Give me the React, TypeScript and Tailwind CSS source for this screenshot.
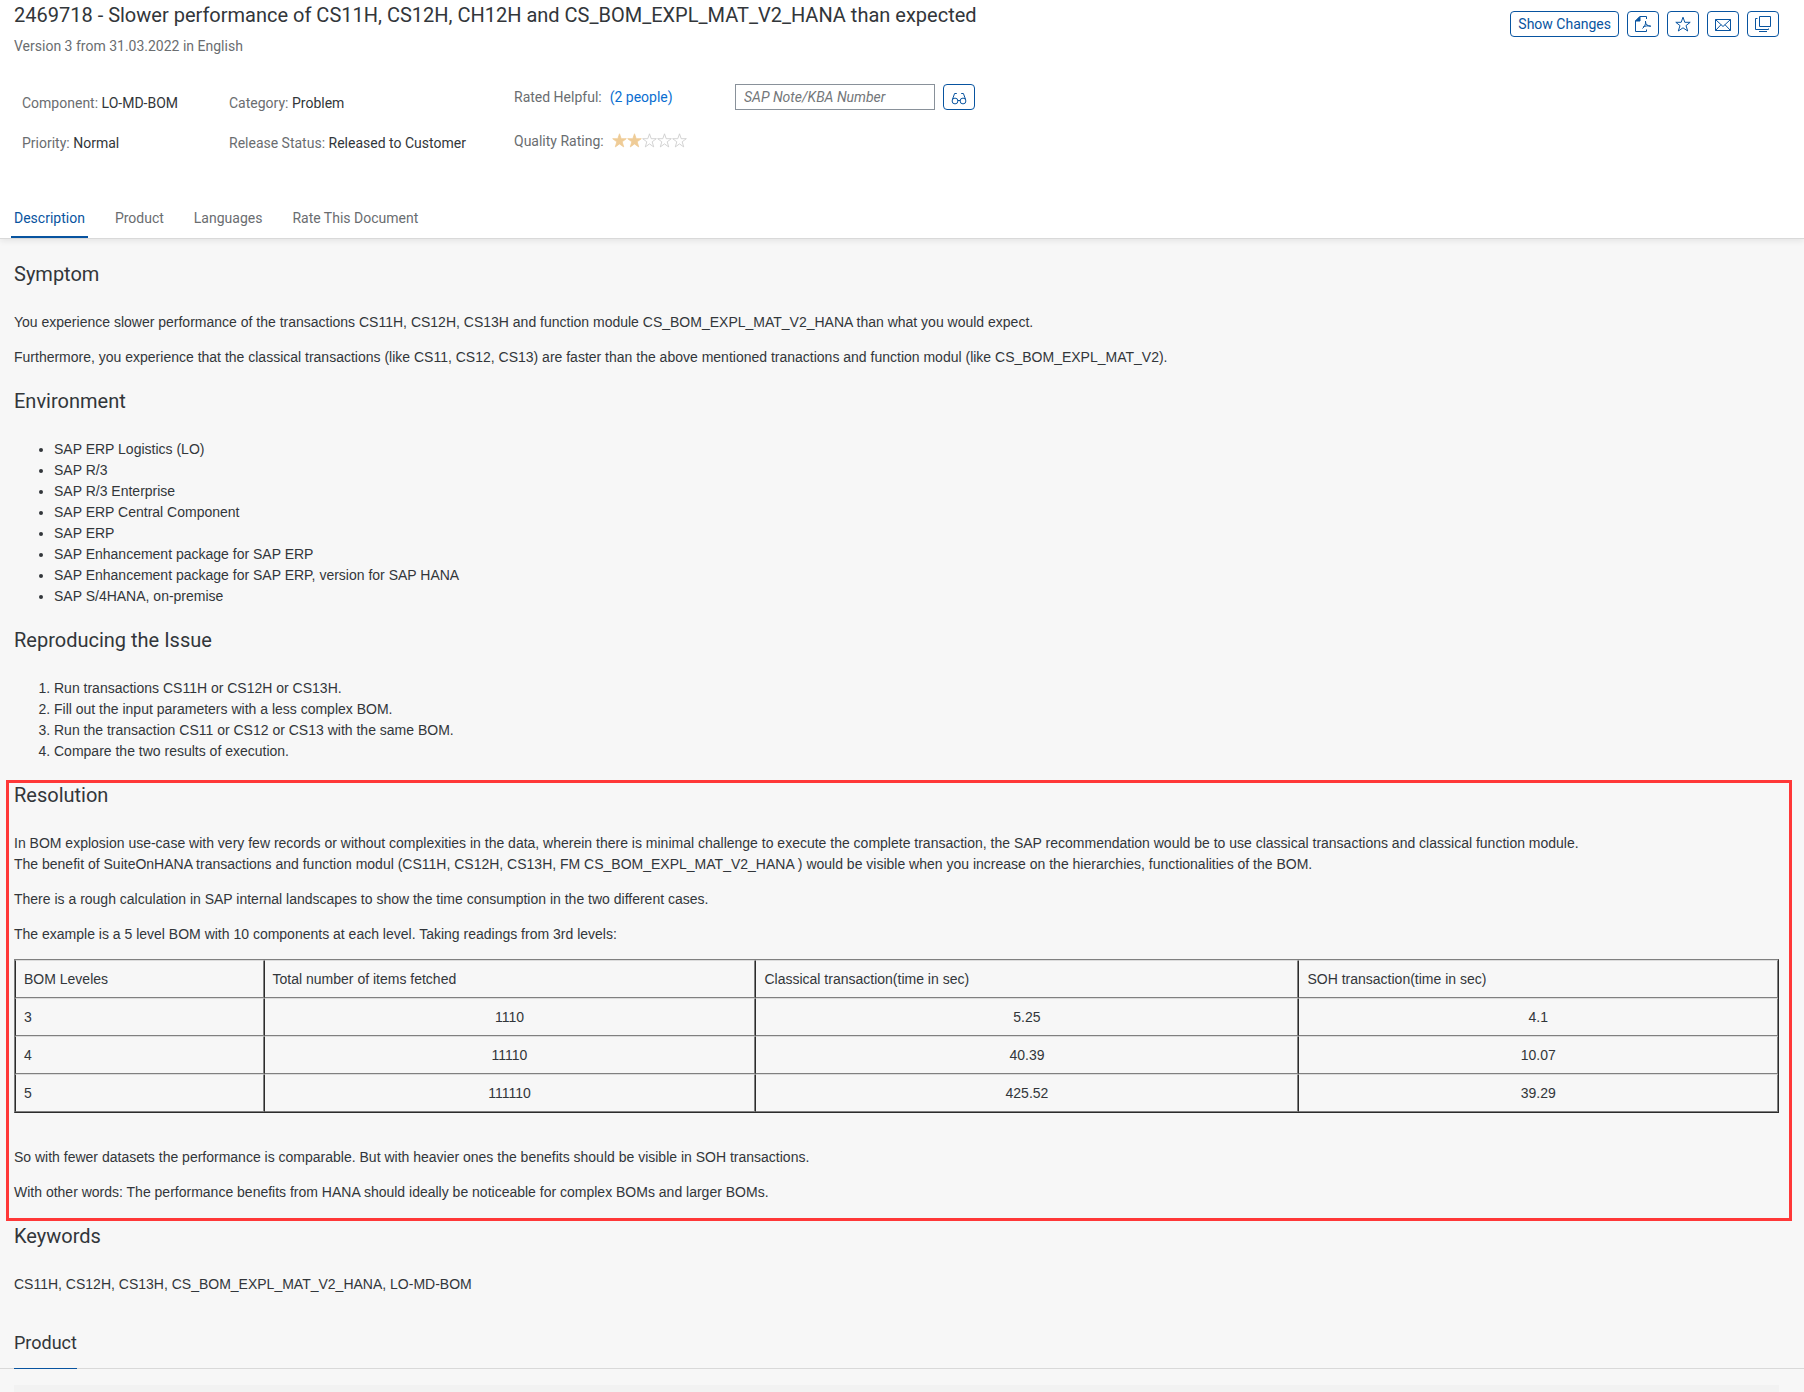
import { useState } from "react";

const tabs = ["Description", "Product", "Languages", "Rate This Document"];

const environments = [
  "SAP ERP Logistics (LO)",
  "SAP R/3",
  "SAP R/3 Enterprise",
  "SAP ERP Central Component",
  "SAP ERP",
  "SAP Enhancement package for SAP ERP",
  "SAP Enhancement package for SAP ERP, version for SAP HANA",
  "SAP S/4HANA, on-premise",
];

const steps = [
  "Run transactions CS11H or CS12H or CS13H.",
  "Fill out the input parameters with a less complex BOM.",
  "Run the transaction CS11 or CS12 or CS13 with the same BOM.",
  "Compare the two results of execution.",
];

const columns = [
  { title: "BOM Leveles", width: "w-[14.1%]" },
  { title: "Total number of items fetched", width: "w-[27.9%]" },
  { title: "Classical transaction(time in sec)", width: "w-[30.8%]" },
  { title: "SOH transaction(time in sec)", width: "w-[27.2%]" },
];

const readings = [
  ["3", "1110", "5.25", "4.1"],
  ["4", "11110", "40.39", "10.07"],
  ["5", "111110", "425.52", "39.29"],
];

const cellBorder =
  "border border-t-[#dcdcdc] border-r-[#808080] border-b-[#808080] border-l-[#2c2c2c] px-2 py-1 h-[38px]";

const PdfIcon = () => (
  <svg width="16" height="16" viewBox="0 0 16 16" fill="none" stroke="currentColor">
    <path d="M11.5 3V.5H5L.5 5v10.500h11V13.500" />
    <path d="M5 .5V5H.5z" fill="currentColor" />
    <path d="M10.500 5c.5 3-.8 5.500-3 7.500M10.500 6c.3 2.500 2 4 5.300 4.300M8 11c2-1 4.500-1.500 7.800-.9" />
  </svg>
);

const StarIcon = () => (
  <svg width="16" height="16" viewBox="0 0 16 16" fill="none" stroke="currentColor">
    <path d="M8 1.200l1.800 5.100h5.400l-4.200 3.300 1.700 5.400L8 11.800 3.300 15 5 9.600.8 6.300h5.400z" />
  </svg>
);

const MailIcon = () => (
  <svg width="16" height="16" viewBox="0 0 16 16" fill="none" stroke="currentColor">
    <path d="M.5 3.500h15v11H.5z" />
    <path d="M.5 3.500L8 10.500l7.500-7M.5 14.500L6 8.700M15.500 14.500L10 8.700" />
  </svg>
);

const CopyIcon = () => (
  <svg width="16" height="16" viewBox="0 0 16 16" fill="none" stroke="currentColor">
    <path d="M4.500.5h11v10h-11zM2.500 2.500h-2v11h13v-1M4 15.500h8" />
  </svg>
);

const GlassesIcon = () => (
  <svg width="16" height="16" viewBox="0 0 16 16" fill="none" stroke="currentColor">
    <circle cx="4" cy="12" r="2.900" />
    <circle cx="12" cy="12" r="2.900" />
    <path d="M6.900 11.500h2.200M1.400 10.500L3.600 4.500H5.800M14.600 10.500L12.400 4.500H10.200" />
  </svg>
);

const actions = [
  { label: "Download PDF", icon: <PdfIcon /> },
  { label: "Add to favorites", icon: <StarIcon /> },
  { label: "Send by email", icon: <MailIcon /> },
  { label: "Open in new window", icon: <CopyIcon /> },
];

const buttonClass =
  "flex h-[26px] items-center justify-center rounded border border-[#0854a0] text-[#0854a0] hover:bg-[#ebf5fe]";

const Field = ({ label, value }: { label: string; value: string }) => (
  <div>
    <dt className="inline">{label}: </dt>
    <dd className="inline text-[#32363a]">{value}</dd>
  </div>
);

const Rating = ({ value }: { value: number }) => (
  <span className="flex pt-0.5" role="img" aria-label={`${value} of 5`}>
    {[1, 2, 3, 4, 5].map((n) => (
      <svg key={n} width="15" height="15" viewBox="0 0 15 15">
        <path
          d="M7.500.8l1.700 4.900h5.100l-4.100 3.100 1.500 5.100-4.200-3-4.200 3 1.500-5.100L.7 5.700h5.100z"
          fill={n <= value ? "#efcc97" : "none"}
          stroke={n <= value ? "#efcc97" : "#c8c8c8"}
          strokeWidth="0.8"
        />
      </svg>
    ))}
  </span>
);

const Heading = ({ children }: { children: React.ReactNode }) => (
  <h2 className="mb-[26px] font-[Roboto,sans-serif] text-xl leading-6">{children}</h2>
);

const App: React.FC = () => {
  const [activeTab, setActiveTab] = useState("Description");
  const [note, setNote] = useState("");

  return (
    <div className="h-screen overflow-hidden bg-[#f7f7f7] font-['Liberation_Sans',Arial,sans-serif] text-sm leading-[21px] text-[#32363a]">
      <header className="relative border-b border-[#d9d9d9] bg-white font-[Roboto,sans-serif] text-[#6a6d70] shadow-[0_2px_6px_rgba(0,0,0,0.08)]">
        <div className="flex items-start justify-between pr-[25px] pl-3.5">
          <div>
            <h1 className="pt-[3px] text-xl leading-6 text-[#32363a]">
              2469718 - Slower performance of CS11H, CS12H, CH12H and
              CS_BOM_EXPL_MAT_V2_HANA than expected
            </h1>
            <p className="mt-[9px]">Version 3 from 31.03.2022 in English</p>
          </div>
          <div className="flex gap-2 pt-[11px]">
            <button className={`${buttonClass} px-[7px]`}>Show Changes</button>
            {actions.map((action) => (
              <button key={action.label} aria-label={action.label} className={`${buttonClass} w-8`}>
                {action.icon}
              </button>
            ))}
          </div>
        </div>

        <div className="flex items-start pt-[27px] pl-[22px]">
          <dl className="flex w-[207px] flex-col gap-[19px] pt-[9px]">
            <Field label="Component" value="LO-MD-BOM" />
            <Field label="Priority" value="Normal" />
          </dl>
          <dl className="flex w-[285px] flex-col gap-[19px] pt-[9px]">
            <Field label="Category" value="Problem" />
            <Field label="Release Status" value="Released to Customer" />
          </dl>
          <div className="flex w-[221px] flex-col gap-[23px] pt-[3px]">
            <div className="flex gap-2">
              Rated Helpful:
              <a href="#" className="text-[#0a6ed1]">
                (2 people)
              </a>
            </div>
            <div className="flex gap-2">
              Quality Rating:
              <Rating value={2} />
            </div>
          </div>
          <div className="flex gap-2">
            <input
              type="text"
              aria-label="SAP Note/KBA Number"
              placeholder="SAP Note/KBA Number"
              value={note}
              onChange={(e) => setNote(e.target.value)}
              className="h-[26px] w-[200px] border border-[#89919a] px-2 placeholder:text-[#74777a] placeholder:italic"
            />
            <button aria-label="Show note" className={`${buttonClass} w-8`}>
              <GlassesIcon />
            </button>
          </div>
        </div>

        <nav className="mt-[54px] flex gap-6 pl-[11px]">
          {tabs.map((tab) => (
            <button
              key={tab}
              onClick={() => setActiveTab(tab)}
              className={`h-[30px] border-b-2 px-[3px] pb-[7px] ${
                activeTab === tab
                  ? "border-[#0854a0] text-[#0854a0]"
                  : "border-transparent"
              }`}
            >
              {tab}
            </button>
          ))}
        </nav>
      </header>

      <main>
        <div className="pr-[25px] pl-3.5">
          <section className="pt-[23px]">
            <Heading>Symptom</Heading>
            <p>
              You experience slower performance of the transactions CS11H, CS12H, CS13H and function
              module CS_BOM_EXPL_MAT_V2_HANA than what you would expect.
            </p>
            <p className="mt-3.5">
              Furthermore, you experience that the classical transactions (like CS11, CS12, CS13) are
              faster than the above mentioned tranactions and function modul (like
              CS_BOM_EXPL_MAT_V2).
            </p>
          </section>

          <section className="pt-[21px]">
            <Heading>Environment</Heading>
            <ul className="list-disc pl-10">
              {environments.map((item) => (
                <li key={item}>{item}</li>
              ))}
            </ul>
          </section>

          <section className="pt-[21px]">
            <Heading>Reproducing the Issue</Heading>
            <ol className="list-decimal pl-10">
              {steps.map((item) => (
                <li key={item}>{item}</li>
              ))}
            </ol>
          </section>
        </div>

        <section className="mt-[18px] mr-3 ml-1.5 border-3 border-[#ff3838] pr-2.5 pb-[15px] pl-[5px]">
          <Heading>Resolution</Heading>
          <p>
            In BOM explosion use-case with very few records or without complexities in the data,
            wherein there is minimal challenge to execute the complete transaction, the SAP
            recommendation would be to use classical transactions and classical function module.
            <br />
            The benefit of SuiteOnHANA transactions and function modul (CS11H, CS12H, CS13H, FM
            CS_BOM_EXPL_MAT_V2_HANA ) would be visible when you increase on the hierarchies,
            functionalities of the BOM.
          </p>
          <p className="mt-3.5">
            There is a rough calculation in SAP internal landscapes to show the time consumption in
            the two different cases.
          </p>
          <p className="mt-3.5">
            The example is a 5 level BOM with 10 components at each level. Taking readings from 3rd
            levels:
          </p>
          <table className="mt-3.5 w-full table-fixed border-separate border-spacing-0 border border-t-[#808080] border-r-[#2c2c2c] border-b-[#2c2c2c] border-l-[#808080]">
            <thead>
              <tr>
                {columns.map((col) => (
                  <th key={col.title} className={`${cellBorder} ${col.width} text-left font-normal`}>
                    {col.title}
                  </th>
                ))}
              </tr>
            </thead>
            <tbody>
              {readings.map((row) => (
                <tr key={row[0]}>
                  {row.map((value, i) => (
                    <td key={i} className={`${cellBorder} ${i > 0 ? "text-center" : ""}`}>
                      {value}
                    </td>
                  ))}
                </tr>
              ))}
            </tbody>
          </table>
          <p className="mt-[34px]">
            So with fewer datasets the performance is comparable. But with heavier ones the benefits
            should be visible in SOH transactions.
          </p>
          <p className="mt-3.5">
            With other words: The performance benefits from HANA should ideally be noticeable for
            complex BOMs and larger BOMs.
          </p>
        </section>

        <section className="px-3.5 pt-[3px]">
          <Heading>Keywords</Heading>
          <p>CS11H, CS12H, CS13H, CS_BOM_EXPL_MAT_V2_HANA, LO-MD-BOM</p>
        </section>

        <section className="pt-9">
          <div className="border-b border-[#d9d9d9] pl-3.5">
            <h2 className="-mb-px inline-block border-b border-[#0854a0] pb-[13px] align-top font-[Roboto,sans-serif] text-lg leading-6">
              Product
            </h2>
          </div>
          <div className="mt-4 mr-[25px] ml-3.5 h-11 bg-[#f2f2f2]" />
        </section>
      </main>
    </div>
  );
};

export default App;
